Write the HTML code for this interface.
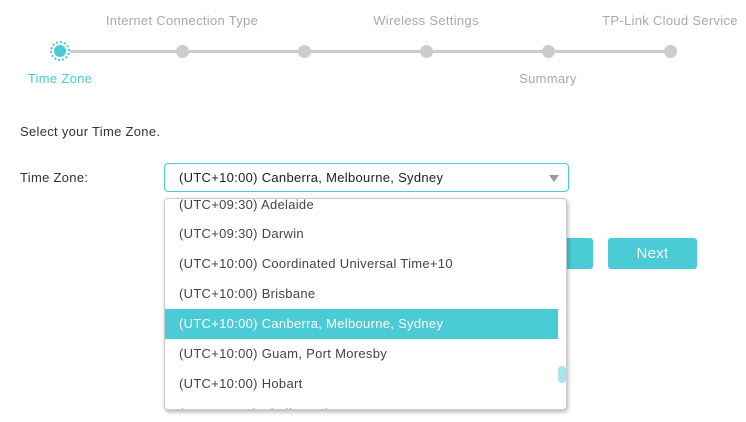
<!DOCTYPE html>
<html><head><style>
body{margin:0;width:746px;height:422px;background:#fff;font-family:"Liberation Sans",sans-serif;font-size:13px;letter-spacing:0.3px;color:#333;position:relative;overflow:hidden}
.a{position:absolute;white-space:nowrap}
.lbl{color:#aaa;transform:translateX(-50%)}
.line{position:absolute;left:60px;top:50px;width:610px;height:3px;background:#ccc}
.dot{position:absolute;width:13px;height:13px;border-radius:50%;background:#ccc;top:45px;margin-left:-6.5px}
.opt{position:absolute;left:0;width:393px;height:30px;line-height:30px;padding-left:14px;box-sizing:border-box;color:#444}
</style></head><body>
<div class="a lbl" style="left:182px;top:13px">Internet Connection Type</div>
<div class="a lbl" style="left:426px;top:13px">Wireless Settings</div>
<div class="a lbl" style="left:670px;top:13px">TP-Link Cloud Service</div>
<div class="line"></div>
<div class="dot" style="left:182px"></div><div class="dot" style="left:304px"></div><div class="dot" style="left:426px"></div><div class="dot" style="left:548px"></div><div class="dot" style="left:670px"></div>
<div class="a" style="left:50px;top:41px;width:20px;height:20px;border:2px dotted #4acbd6;border-radius:50%;box-sizing:border-box;background:#fff"></div>
<div class="a" style="left:54px;top:45px;width:12px;height:12px;border-radius:50%;background:#4acbd6"></div>
<div class="a lbl" style="left:60px;top:71px;color:#4acbd6">Time Zone</div>
<div class="a lbl" style="left:548px;top:71px">Summary</div>
<div class="a" style="left:20px;top:124px">Select your Time Zone.</div>
<div class="a" style="left:20px;top:170px">Time Zone:</div>
<div class="a" style="left:164px;top:163px;width:405px;height:29px;border:1px solid #4acbd6;border-radius:4px;box-sizing:border-box;line-height:27px;padding-left:14px;color:#222">(UTC+10:00) Canberra, Melbourne, Sydney
<div class="a" style="right:9px;top:11px;width:0;height:0;border-left:5px solid transparent;border-right:5px solid transparent;border-top:7px solid #999"></div></div>
<div class="a" style="left:520px;top:238px;width:73px;height:31px;background:#4acbd6;border-radius:3px"></div>
<div class="a" style="left:608px;top:238px;width:89px;height:31px;background:#4acbd6;border-radius:3px;color:#fff;font-size:15px;line-height:31px;text-align:center">Next</div>
<div class="a" style="left:164px;top:198px;width:403px;height:212px;background:#fff;border:1px solid #ccc;border-radius:4px;box-sizing:border-box;box-shadow:1px 2px 4px rgba(0,0,0,.3);overflow:hidden">
<div class="opt" style="top:-9px">(UTC+09:30) Adelaide</div>
<div class="opt" style="top:20px">(UTC+09:30) Darwin</div>
<div class="opt" style="top:50px">(UTC+10:00) Coordinated Universal Time+10</div>
<div class="opt" style="top:80px">(UTC+10:00) Brisbane</div>
<div class="opt" style="top:110px;background:#4acbd6;color:#fff">(UTC+10:00) Canberra, Melbourne, Sydney</div>
<div class="opt" style="top:140px">(UTC+10:00) Guam, Port Moresby</div>
<div class="opt" style="top:170px">(UTC+10:00) Hobart</div>
<div class="opt" style="top:200px">(UTC+10:00) Vladivostok</div>
<div class="a" style="left:393px;top:167px;width:8px;height:17px;border-radius:4px;background:#a6e5ea"></div>
</div>
</body></html>
